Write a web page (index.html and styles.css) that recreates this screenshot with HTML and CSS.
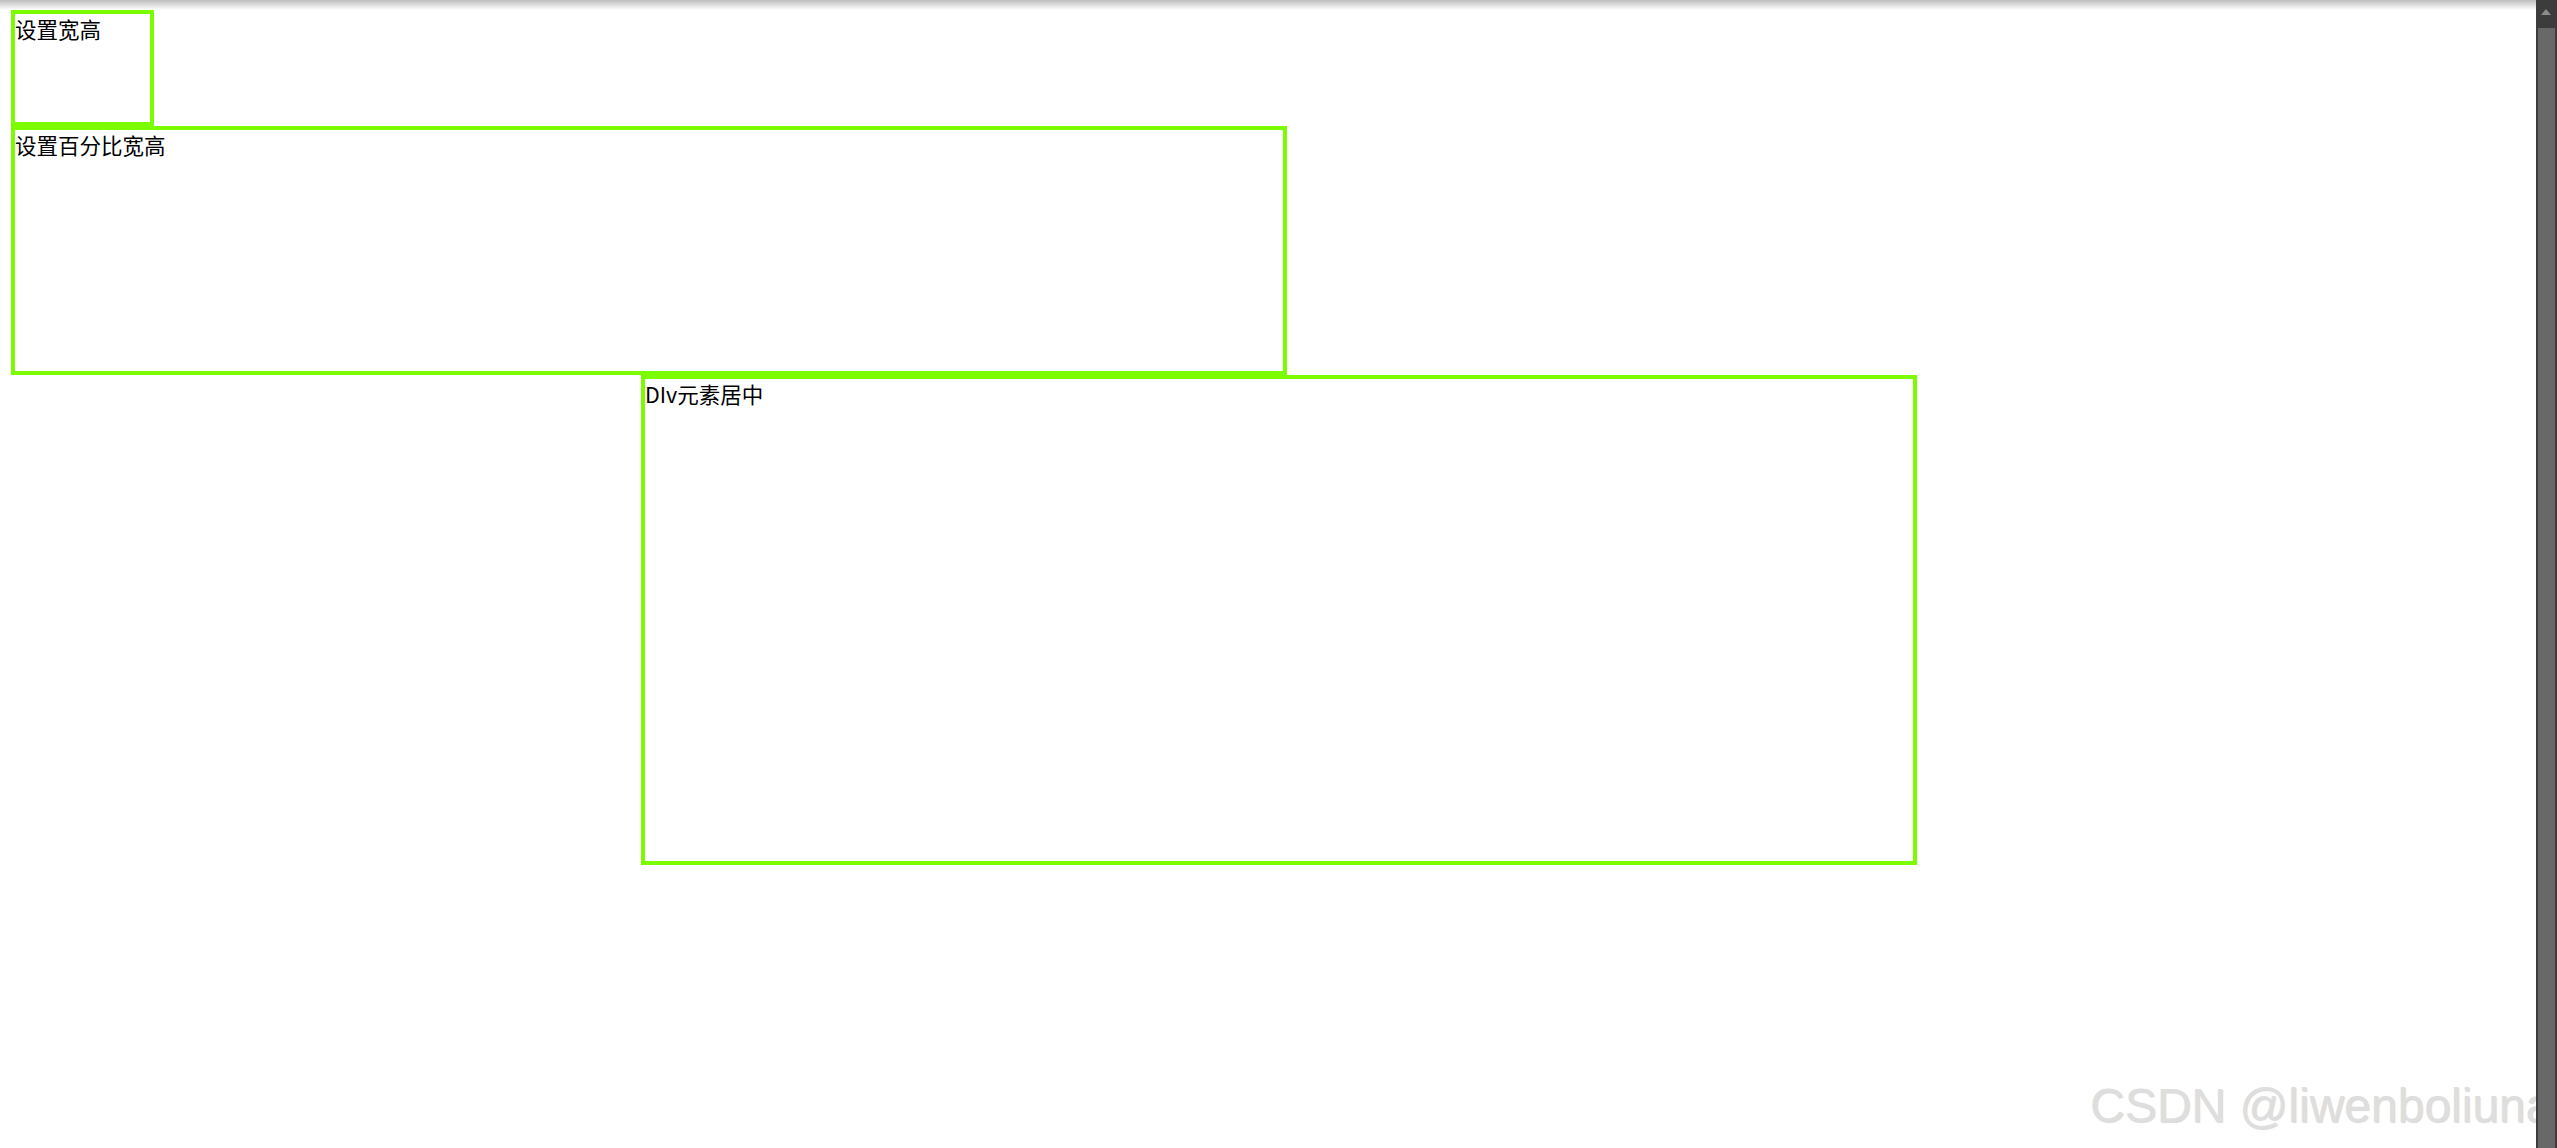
FILE: index.html
```html
<!DOCTYPE html>
<html lang="zh">
<head>
<meta charset="utf-8">
<title>Div</title>
<link rel="stylesheet" href="styles.css">
</head>
<body>
<div class="page">
  <div class="box box-fixed">设置宽高</div>
  <div class="box box-percent">设置百分比宽高</div>
  <div class="box box-center">DIv元素居中</div>
</div>
<div class="top-shadow"></div>
<div class="watermark">CSDN @liwenboliuna</div>
<div class="scrollbar">
  <div class="scroll-up"></div>
  <div class="scroll-thumb"></div>
</div>
</body>
</html>
```

FILE: styles.css
```css
html, body {
  margin: 0;
  height: 100%;
  overflow: hidden;
  background: #ffffff;
}

.page {
  padding: 10px 0 0 11px;
  font-family: "Noto Sans CJK SC", "Liberation Sans", sans-serif;
  font-size: 21.5px;
  line-height: 30px;
  color: #000000;
}

.box {
  box-sizing: border-box;
  border: 4px solid #7cfc00;
}

.box-fixed {
  width: 143px;
  height: 116px;
}

.box-percent {
  width: 1276px;
  height: 249px;
}

.box-center {
  width: 1276px;
  height: 490px;
  margin-left: 630px;
}

.top-shadow {
  position: fixed;
  top: 0;
  left: 0;
  right: 21px;
  height: 10px;
  background: linear-gradient(to bottom, #bdbdbd, rgba(255, 255, 255, 0));
}

.watermark {
  position: absolute;
  left: 2090px;
  top: 1082px;
  font-family: "Liberation Sans", Arial, sans-serif;
  font-size: 48px;
  line-height: 48px;
  white-space: nowrap;
  color: #dedede;
  text-shadow: 1px 1px 1px rgba(0, 0, 0, 0.15);
}

.scrollbar {
  position: fixed;
  top: 0;
  right: 0;
  width: 21px;
  height: 100%;
  background: #3c3c3c;
}

.scroll-up {
  position: absolute;
  top: 9px;
  left: 5px;
  width: 0;
  height: 0;
  border-left: 5.5px solid transparent;
  border-right: 5.5px solid transparent;
  border-bottom: 6px solid #8c8c8c;
}

.scroll-thumb {
  position: absolute;
  top: 28px;
  left: 2px;
  right: 2px;
  bottom: 0;
  background: #686868;
}
```
